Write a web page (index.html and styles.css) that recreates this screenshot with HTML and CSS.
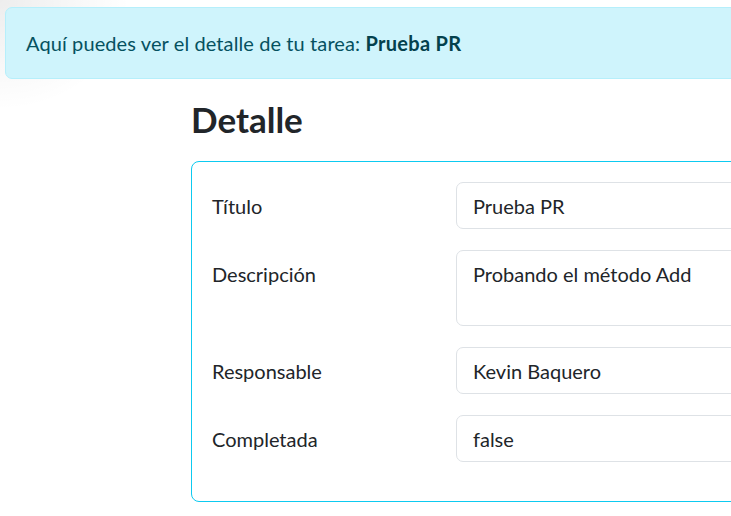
FILE: index.html
```html
<!DOCTYPE html>
<html lang="es">
<head>
<meta charset="utf-8">
<title>Detalle</title>
<link rel="stylesheet" href="styles.css">
</head>
<body>
<div class="page">
  <div class="alert">Aquí puedes ver el detalle de tu tarea: <strong class="alert-link">Prueba PR</strong></div>
  <main class="content">
    <h3 class="title">Detalle</h3>
    <section class="card">
      <div class="row">
        <label class="label">Título</label>
        <div class="control">Prueba PR</div>
      </div>
      <div class="row">
        <label class="label">Descripción</label>
        <div class="control control-area">Probando el método Add</div>
      </div>
      <div class="row">
        <label class="label">Responsable</label>
        <div class="control">Kevin Baquero</div>
      </div>
      <div class="row">
        <label class="label">Completada</label>
        <div class="control">false</div>
      </div>
    </section>
  </main>
</div>
</body>
</html>
```
FILE: styles.css
```css
html, body {
  margin: 0;
  padding: 0;
}
body {
  width: 731px;
  height: 516px;
  overflow: hidden;
  background: #fff radial-gradient(ellipse 130px 110px at 0 0, rgba(0,0,0,0.07), rgba(0,0,0,0));
  font-family: "Lato", "Noto Sans", sans-serif;
  font-size: 20px;
  line-height: 30px;
  color: #212529;
}
.page {
  width: 1100px;
  padding: 7px 0 0 5px;
}
.alert {
  box-sizing: border-box;
  height: 72px;
  padding: 20px 20px;
  border: 1px solid #b6effb;
  border-radius: 7px;
  background: #cff4fc;
  color: #055160;
  letter-spacing: 0.1px;
}
.alert-link {
  font-weight: 700;
  color: #04414d;
  letter-spacing: 0.3px;
}
.content {
  margin: 0 0 0 186px;
}
.title {
  margin: 19px 0 0 0;
  font-size: 35px;
  line-height: 42px;
  font-weight: 700;
  color: #212529;
}
.card {
  margin-top: 21px;
  width: 800px;
  border: 1px solid #0dcaf0;
  border-radius: 8px;
  padding: 20px 20px 19px 20px;
}
.row {
  display: grid;
  grid-template-columns: 244px 1fr;
  margin-bottom: 21px;
}
.row:last-child {
  margin-bottom: 20px;
}
.label {
  padding-top: 9px;
  line-height: 30px;
}
.control {
  box-sizing: border-box;
  height: 47px;
  padding: 8px 16px;
  border: 1px solid #dee2e6;
  border-radius: 7px;
  line-height: 30px;
  color: #212529;
}
.control-area {
  height: 76px;
}
```
